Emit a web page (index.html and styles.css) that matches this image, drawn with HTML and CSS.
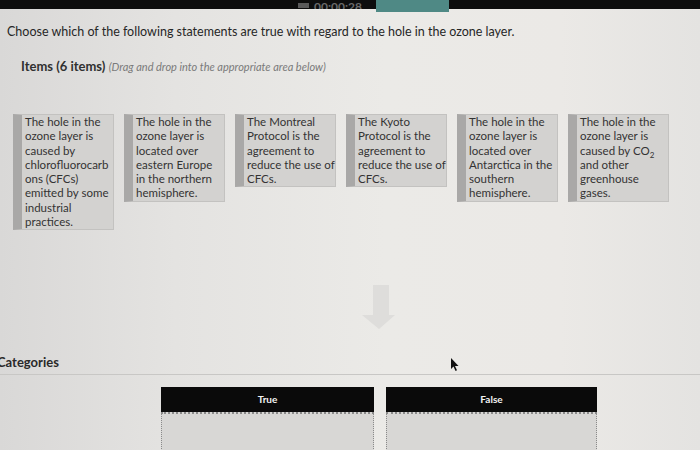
FILE: index.html
```html
<!DOCTYPE html>
<html>
<head>
<meta charset="utf-8">
<link rel="stylesheet" href="styles.css">
</head>
<body>
<div class="topbar">
  <div class="timer"><span class="ticon"></span><span class="ttext">00:00:28</span></div>
  <div class="tab"></div>
</div>
<p class="title">Choose which of the following statements are true with regard to the hole in the ozone layer.</p>
<p class="items"><b>Items (6 items)</b> <i>(Drag and drop into the appropriate area below)</i></p>
<div class="cards">
  <div class="card">The hole in the ozone layer is caused by chlorofluorocarb<wbr>ons (CFCs) emitted by some industrial practices.</div>
  <div class="card">The hole in the ozone layer is located over eastern Europe in the northern hemisphere.</div>
  <div class="card">The Montreal Protocol is the agreement to reduce the use of CFCs.</div>
  <div class="card">The Kyoto Protocol is the agreement to reduce the use of CFCs.</div>
  <div class="card">The hole in the ozone layer is located over Antarctica in the southern hemisphere.</div>
  <div class="card">The hole in the ozone layer is caused by CO<sub>2</sub> and other greenhouse gases.</div>
</div>
<div class="arrow">
  <svg width="34" height="45" viewBox="0 0 34 45"><path d="M11 0 H27 V30 H33 L17 44 L0 30 H11 Z" fill="#dedddb"/></svg>
</div>
<div class="cathead">Categories</div>
<div class="cats">
  <div class="cat"><div class="cathdr">True</div><div class="drop"></div></div>
  <div class="cat"><div class="cathdr">False</div><div class="drop"></div></div>
</div>
<svg class="cursor" width="10" height="14" viewBox="0 0 10 14"><path d="M1 0 L1 11 L3.5 8.5 L5.5 13 L7 12.3 L5 8 L8.5 8 Z" fill="#111"/></svg>
</body>
</html>
```
FILE: styles.css
```css
html, body {
  margin: 0;
  padding: 0;
}
body {
  width: 700px;
  height: 450px;
  overflow: hidden;
  position: relative;
  font-family: Lato, "Open Sans", sans-serif;
  color: #2b2b2b;
  background: linear-gradient(90deg, #d9d8d7 0%, #e4e3e1 25%, #ebeae7 55%, #ebe9e6 80%, #e4e3e1 100%);
}
.topbar {
  height: 9px;
  background: #0d0d0d;
  display: flex;
  align-items: flex-start;
}
.timer {
  margin-left: 298px;
  height: 9px;
  overflow: hidden;
  display: flex;
  align-items: flex-end;
  gap: 5px;
  width: 78px;
}
.ticon {
  width: 11px;
  height: 5px;
  background: #5a5a5a;
  margin-bottom: 1px;
}
.ttext {
  font-size: 12px;
  line-height: 12px;
  color: #6a6a6a;
  font-weight: bold;
  margin-bottom: -4px;
}
.tab {
  width: 73px;
  height: 12px;
  background: #4f8985;
}
.title {
  margin: 15px 0 0 7px;
  font-size: 12.5px;
  line-height: 16px;
  color: #262626;
}
.items {
  margin: 18px 0 0 21px;
  font-size: 13px;
  line-height: 16px;
  color: #303030;
}
.items i {
  font-size: 11px;
  color: #7a7a7a;
}
.cards {
  margin: 39px 0 0 13px;
  display: flex;
  gap: 10px;
  align-items: flex-start;
}
.card {
  box-sizing: border-box;
  width: 101px;
  background: #d3d2d0;
  border: 1px solid #c3c2c0;
  border-left: 9px solid #a9a8a7;
  padding: 0 0 0 3px;
  font-size: 11.5px;
  line-height: 14.3px;
  color: #333;
}
.card sub {
  font-size: 8px;
  line-height: 0;
}
.arrow {
  margin: 55px 0 0 362px;
  height: 45px;
}
.arrow svg {
  display: block;
}
.cathead {
  margin: 24px 0 0 -3px;
  font-size: 13px;
  line-height: 16px;
  font-weight: bold;
  color: #2a2a2a;
  padding-bottom: 4px;
  border-bottom: 1px solid #c8c7c5;
}
.cats {
  margin: 12px 0 0 161px;
  display: flex;
  gap: 12px;
}
.cat {
  width: 213px;
}
.cat + .cat {
  width: 211px;
}
.cathdr {
  height: 25px;
  background: #0a0a0a;
  color: #f2f2f2;
  font-size: 10px;
  font-weight: bold;
  line-height: 25px;
  text-align: center;
}
.drop {
  height: 60px;
  background: #d8d7d5;
  border: 1px dotted #8a8a8a;
  border-top: 2px dotted #8a8a8a;
}
.cursor {
  position: absolute;
  left: 450px;
  top: 358px;
}
```
